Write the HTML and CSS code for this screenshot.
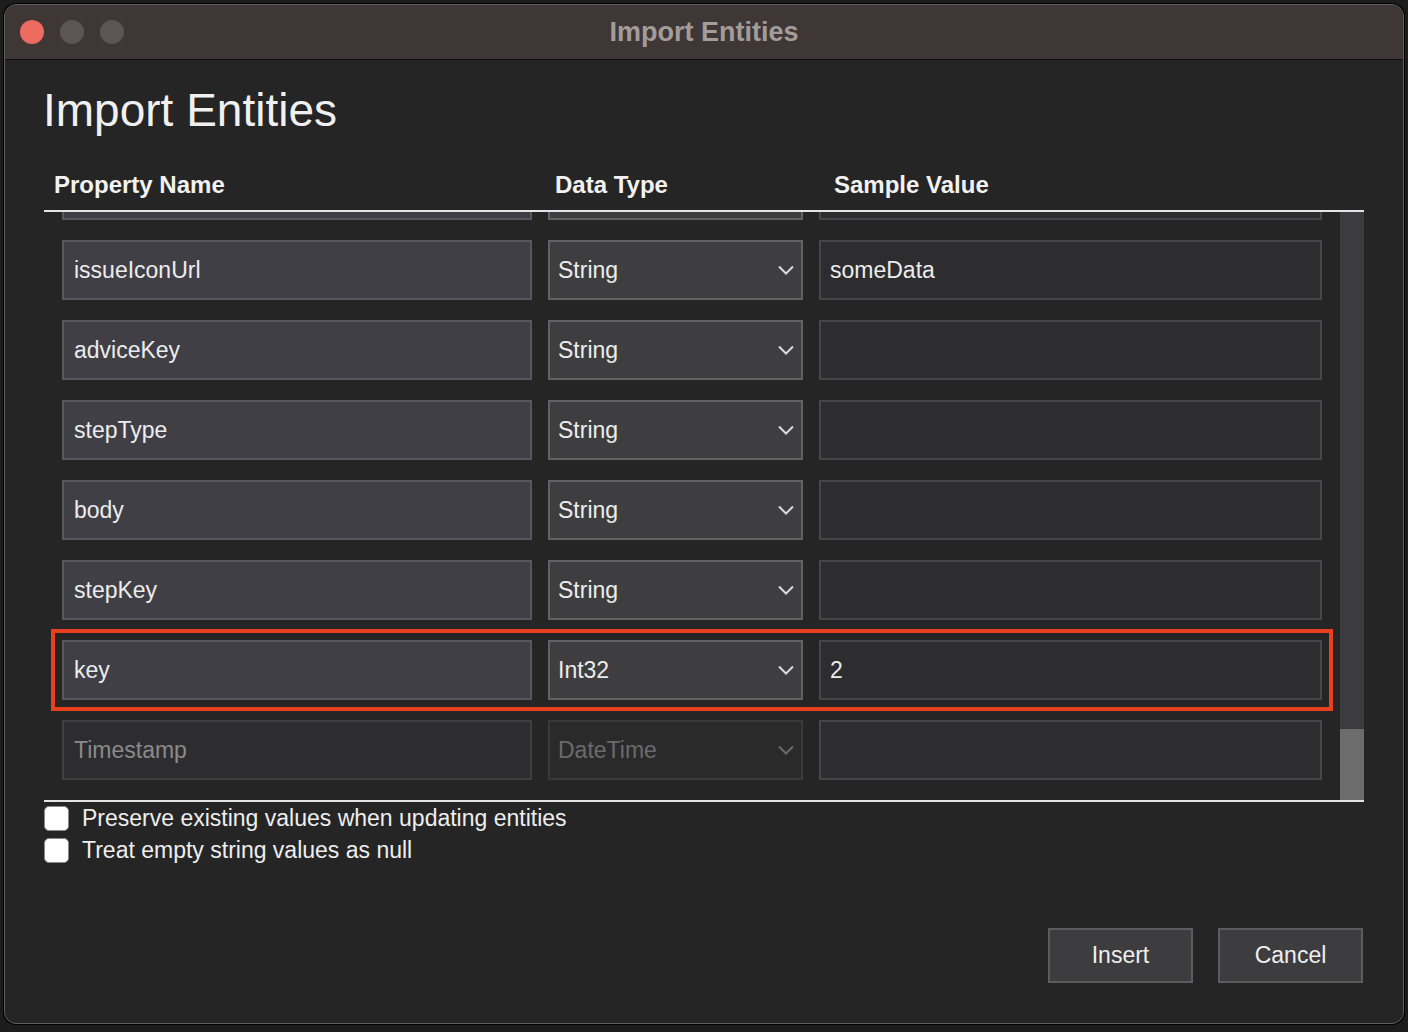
FILE: index.html
```html
<!DOCTYPE html>
<html lang="en">
<head>
<meta charset="utf-8">
<title>Import Entities</title>
<link rel="stylesheet" href="styles.css">
</head>
<body>
<div class="window">
  <div class="titlebar">
    <div class="lights">
      <span class="light red"></span>
      <span class="light gray"></span>
      <span class="light gray"></span>
    </div>
    <div class="title">Import Entities</div>
    <div></div>
  </div>
  <div class="content">
    <h1 class="heading">Import Entities</h1>
    <div class="table">
      <div class="thead">
        <div>Property Name</div>
        <div>Data Type</div>
        <div>Sample Value</div>
      </div>
      <div class="tbody">
        <div class="viewport">
          <div class="rows">
            <div class="row">
              <div class="field name"></div>
              <div class="field type"><span></span><svg class="chev" width="16" height="10" viewBox="0 0 16 10"><path d="M1 1.5 L8 8.5 L15 1.5" fill="none" stroke="currentColor" stroke-width="2"/></svg></div>
              <div class="field sample"></div>
            </div>
            <div class="row">
              <div class="field name">issueIconUrl</div>
              <div class="field type"><span>String</span><svg class="chev" width="16" height="10" viewBox="0 0 16 10"><path d="M1 1.5 L8 8.5 L15 1.5" fill="none" stroke="currentColor" stroke-width="2"/></svg></div>
              <div class="field sample">someData</div>
            </div>
            <div class="row">
              <div class="field name">adviceKey</div>
              <div class="field type"><span>String</span><svg class="chev" width="16" height="10" viewBox="0 0 16 10"><path d="M1 1.5 L8 8.5 L15 1.5" fill="none" stroke="currentColor" stroke-width="2"/></svg></div>
              <div class="field sample"></div>
            </div>
            <div class="row">
              <div class="field name">stepType</div>
              <div class="field type"><span>String</span><svg class="chev" width="16" height="10" viewBox="0 0 16 10"><path d="M1 1.5 L8 8.5 L15 1.5" fill="none" stroke="currentColor" stroke-width="2"/></svg></div>
              <div class="field sample"></div>
            </div>
            <div class="row">
              <div class="field name">body</div>
              <div class="field type"><span>String</span><svg class="chev" width="16" height="10" viewBox="0 0 16 10"><path d="M1 1.5 L8 8.5 L15 1.5" fill="none" stroke="currentColor" stroke-width="2"/></svg></div>
              <div class="field sample"></div>
            </div>
            <div class="row">
              <div class="field name">stepKey</div>
              <div class="field type"><span>String</span><svg class="chev" width="16" height="10" viewBox="0 0 16 10"><path d="M1 1.5 L8 8.5 L15 1.5" fill="none" stroke="currentColor" stroke-width="2"/></svg></div>
              <div class="field sample"></div>
            </div>
            <div class="row selected">
              <div class="field name">key</div>
              <div class="field type"><span>Int32</span><svg class="chev" width="16" height="10" viewBox="0 0 16 10"><path d="M1 1.5 L8 8.5 L15 1.5" fill="none" stroke="currentColor" stroke-width="2"/></svg></div>
              <div class="field sample">2</div>
            </div>
            <div class="row disabled">
              <div class="field name">Timestamp</div>
              <div class="field type"><span>DateTime</span><svg class="chev" width="16" height="10" viewBox="0 0 16 10"><path d="M1 1.5 L8 8.5 L15 1.5" fill="none" stroke="currentColor" stroke-width="2"/></svg></div>
              <div class="field sample"></div>
            </div>
          </div>
        </div>
        <div class="scrollbar"><div class="thumb"></div></div>
      </div>
    </div>
    <div class="options">
      <label class="option"><span class="checkbox"></span><span>Preserve existing values when updating entities</span></label>
      <label class="option"><span class="checkbox"></span><span>Treat empty string values as null</span></label>
    </div>
    <div class="footer">
      <button class="btn" type="button">Insert</button>
      <button class="btn" type="button">Cancel</button>
    </div>
  </div>
</div>
</body>
</html>
```

FILE: styles.css
```css
html, body {
  margin: 0;
  background: #1c1c1c;
}
body {
  padding: 4px;
  font-family: "Liberation Sans", Arial, sans-serif;
}
.window {
  width: 1400px;
  height: 1020px;
  box-sizing: border-box;
  border: 1px solid #5e5e5e;
  border-radius: 12px;
  background: #252525;
  overflow: hidden;
  display: flex;
  flex-direction: column;
  box-shadow: 0 0 0 1px #000;
}
.titlebar {
  height: 55px;
  flex: none;
  box-sizing: border-box;
  background: #3f3735;
  border-bottom: 1px solid #0c0c0c;
  display: grid;
  grid-template-columns: 1fr auto 1fr;
  align-items: center;
}
.lights {
  display: flex;
  gap: 16px;
  padding-left: 15px;
}
.light {
  width: 24px;
  height: 24px;
  border-radius: 50%;
  display: block;
}
.light.red { background: #ec6a5f; }
.light.gray { background: #5b5654; }
.title {
  font-size: 27px;
  font-weight: 700;
  color: #a39c9a;
}
.content {
  flex: 1;
  display: flex;
  flex-direction: column;
  padding: 0 39px;
}
.heading {
  margin: 20px 0 0 -1px;
  font-size: 46px;
  font-weight: 400;
  line-height: 60px;
  color: #f0f0f0;
}
.thead {
  display: grid;
  grid-template-columns: 501px 279px 1fr;
  padding: 30px 0 10px 10px;
  line-height: 30px;
  font-size: 24px;
  font-weight: 700;
  color: #f2f2f2;
  border-bottom: 2px solid #e4e4e4;
}
.tbody {
  display: flex;
  height: 588px;
  border-bottom: 2px solid #e4e4e4;
}
.viewport {
  flex: 1;
  overflow: hidden;
  padding-left: 18px;
}
.rows {
  display: flex;
  flex-direction: column;
  align-items: flex-start;
  gap: 20px;
  margin-top: -52px;
}
.row {
  display: grid;
  grid-template-columns: 470px 255px 503px;
  gap: 16px;
  height: 60px;
}
.row.selected {
  outline: 4px solid #e8401e;
  outline-offset: 7px;
}
.field {
  box-sizing: border-box;
  border: 2px solid;
  display: flex;
  align-items: center;
  font-size: 23px;
  color: #ececec;
}
.name {
  background: #403f45;
  border-color: #58575c;
  padding-left: 10px;
}
.type {
  background: #3e3e40;
  border-color: #636363;
  padding: 0 7px 0 8px;
  justify-content: space-between;
}
.chev {
  color: #dcdcdc;
  display: block;
}
.sample {
  background: #2d2d30;
  border-color: #46454b;
  padding-left: 9px;
}
.row.disabled .name {
  background: #2d2d30;
  border-color: #3f3e43;
  color: #8a8a8a;
}
.row.disabled .type {
  background: #2a2a2b;
  border-color: #3a3a3c;
  color: #6b6b6b;
}
.row.disabled .chev {
  color: #6b6b6b;
}
.scrollbar {
  width: 24px;
  background: #3c3b40;
  display: flex;
  flex-direction: column;
  justify-content: flex-end;
}
.thumb {
  height: 71px;
  background: #6c6c6c;
}
.options {
  display: flex;
  flex-direction: column;
}
.option {
  display: flex;
  align-items: center;
  gap: 13px;
  height: 32px;
  font-size: 23px;
  color: #eeeeee;
}
.checkbox {
  width: 25px;
  height: 25px;
  box-sizing: border-box;
  background: #ffffff;
  border: 1px solid #8a8a8a;
  border-radius: 5px;
  display: block;
}
.footer {
  margin-top: auto;
  display: flex;
  justify-content: flex-end;
  gap: 25px;
  padding: 0 1px 40px 0;
}
.btn {
  width: 145px;
  height: 55px;
  box-sizing: border-box;
  margin: 0;
  background: #3d3d40;
  border: 2px solid #5c5c5c;
  border-radius: 0;
  color: #efefef;
  font-family: "Liberation Sans", Arial, sans-serif;
  font-size: 23px;
  display: flex;
  align-items: center;
  justify-content: center;
}
```
